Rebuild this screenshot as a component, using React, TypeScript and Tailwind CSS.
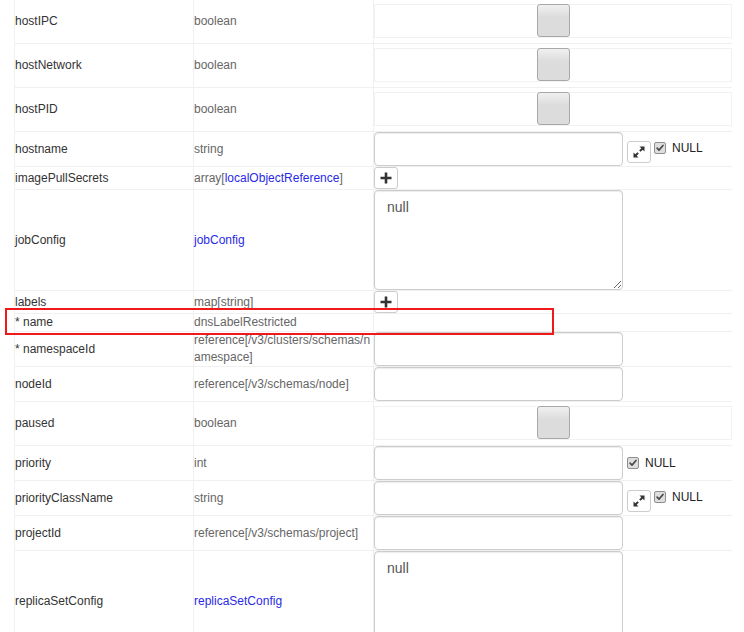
import type { ReactNode } from 'react';

type Field = {
  name: string;
  required?: boolean;
  type: ReactNode;
  input: 'bool' | 'text' | 'plus' | 'area' | 'none';
  expand?: boolean;
  nullable?: boolean;
};

const Link = ({ children }: { children: ReactNode }) => (
  <span className="text-[#2a2ae6]">{children}</span>
);

const fields: Field[] = [
  { name: 'hostIPC', type: 'boolean', input: 'bool' },
  { name: 'hostNetwork', type: 'boolean', input: 'bool' },
  { name: 'hostPID', type: 'boolean', input: 'bool' },
  { name: 'hostname', type: 'string', input: 'text', expand: true, nullable: true },
  {
    name: 'imagePullSecrets',
    type: (
      <>
        array[<Link>localObjectReference</Link>]
      </>
    ),
    input: 'plus',
  },
  { name: 'jobConfig', type: <Link>jobConfig</Link>, input: 'area' },
  { name: 'labels', type: 'map[string]', input: 'plus' },
  { name: 'name', required: true, type: 'dnsLabelRestricted', input: 'none' },
  { name: 'namespaceId', required: true, type: 'reference[/v3/clusters/schemas/namespace]', input: 'text' },
  { name: 'nodeId', type: 'reference[/v3/schemas/node]', input: 'text' },
  { name: 'paused', type: 'boolean', input: 'bool' },
  { name: 'priority', type: 'int', input: 'text', nullable: true },
  { name: 'priorityClassName', type: 'string', input: 'text', expand: true, nullable: true },
  { name: 'projectId', type: 'reference[/v3/schemas/project]', input: 'text' },
  { name: 'replicaSetConfig', type: <Link>replicaSetConfig</Link>, input: 'area' },
];

function NullCheck() {
  return (
    <label className="flex items-center gap-[6px]">
      <span className="grid h-[12px] w-[12px] place-items-center rounded-[2px] border border-[#8e8e8e] bg-[#dedede]">
        <svg viewBox="0 0 12 12" className="h-[10px] w-[10px]" fill="none" stroke="#4a4a4a" strokeWidth="2" strokeLinecap="round" strokeLinejoin="round">
          <path d="M2.5 6.2l2.3 2.4L9.6 3" />
        </svg>
      </span>
      <span className="text-[12px] text-[#222]">NULL</span>
    </label>
  );
}

function ExpandButton() {
  return (
    <button type="button" className="mt-[5px] grid h-[22px] w-[24px] place-items-center rounded-[3px] border border-[#ccc] bg-white">
      <svg viewBox="0 0 12 12" className="h-[12px] w-[12px]" fill="#333">
        <path d="M6.5 0.5h5v5L9.7 3.7 7.6 5.8 6.2 4.4 8.3 2.3z" />
        <path d="M5.5 11.5h-5v-5l1.8 1.8 2.1-2.1 1.4 1.4-2.1 2.1z" />
      </svg>
    </button>
  );
}

function ValueCell({ f }: { f: Field }) {
  if (f.input === 'bool') {
    return (
      <div className="w-full pt-[4px] pb-[5px]">
        <div className="flex h-[34px] justify-center border border-[#f2f2f2]">
          <span className="h-[33px] w-[33px] -mt-px rounded-[3px] border border-[#a8a8a8] bg-[linear-gradient(#f0f0f0,#dcdcdc_40%)]" />
        </div>
      </div>
    );
  }
  if (f.input === 'plus') {
    return (
      <button type="button" className="grid h-[22px] w-[24px] place-items-center rounded-[3px] border border-[#ccc] bg-white">
        <svg viewBox="0 0 12 12" className="h-[12px] w-[12px]" fill="#333">
          <path d="M4.7 0.5h2.6v4.2h4.2v2.6H7.3v4.2H4.7V7.3H0.5V4.7h4.2z" />
        </svg>
      </button>
    );
  }
  if (f.input === 'area') {
    return (
      <textarea
        defaultValue="null"
        className="block h-[100px] w-[249px] resize rounded-[4px] border border-[#ccc] bg-white px-[12px] py-[6px] text-[14px] leading-[20px] text-[#555] shadow-[inset_0_1px_1px_rgba(0,0,0,0.075)] outline-none"
      />
    );
  }
  if (f.input === 'text') {
    return (
      <div className="flex items-center">
        <input
          type="text"
          className="h-[34px] w-[249px] rounded-[4px] border border-[#ccc] bg-white shadow-[inset_0_1px_1px_rgba(0,0,0,0.075)] outline-none"
        />
        {f.expand && (
          <div className="ml-[4px] flex items-center gap-[3px]">
            <ExpandButton />
            <div className="-mt-[2px]">
              <NullCheck />
            </div>
          </div>
        )}
        {!f.expand && f.nullable && (
          <div className="ml-[4px]">
            <NullCheck />
          </div>
        )}
      </div>
    );
  }
  return null;
}

export default function App() {
  return (
    <div className="relative min-h-[632px] bg-white font-['Liberation_Sans',Arial,sans-serif] text-[12px] leading-[17px]">
      <div className="ml-[14px] w-[718px]">
        {fields.map((f) => (
          <div key={f.name} className="flex border-b border-[#f0f0f0]">
            <div className="flex w-[179px] shrink-0 items-center border-l border-[#f0f0f0] text-[#333]">
              {f.required ? `* ${f.name}` : f.name}
            </div>
            <div className="flex w-[180px] shrink-0 items-center border-l border-[#f0f0f0] text-[#666] break-all">
              <span>{f.type}</span>
            </div>
            <div className="flex min-h-[17px] w-[359px] shrink-0 items-center border-l border-[#f0f0f0]">
              <ValueCell f={f} />
            </div>
          </div>
        ))}
      </div>

      {/* highlight marker around the name row */}
      <div className="pointer-events-none absolute left-[5px] top-[308px] h-[27px] w-[549px] border-2 border-[#f01818]" />
    </div>
  );
}
